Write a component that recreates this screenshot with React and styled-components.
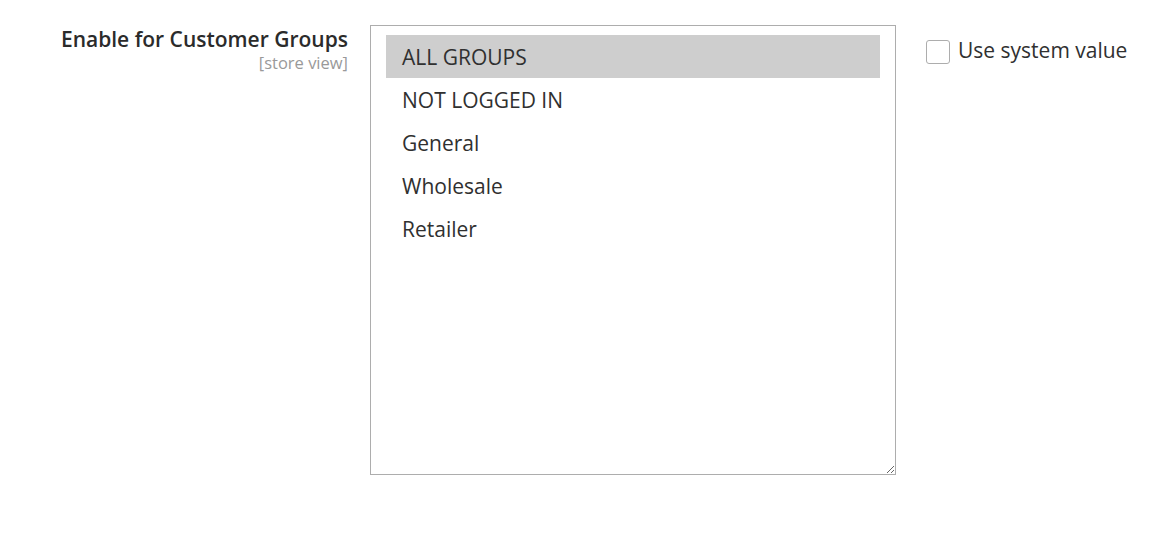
import styled, { createGlobalStyle } from "styled-components";

const GlobalStyle = createGlobalStyle`
    body {
        margin: 0;
        background: #fff;
        font-family: "Open Sans", "Liberation Sans", sans-serif;
        color: #303030;
    }
`;

const Field = styled.div`
    display: flex;
    align-items: flex-start;
    padding-top: 25px;
`;

const LabelCol = styled.div`
    width: 348px;
    text-align: right;
    padding-top: 2px;
`;

const Title = styled.div`
    font-size: 21px;
    font-weight: 600;
    line-height: 24px;
    color: #2b2b2b;
`;

const Scope = styled.div`
    margin-top: 3px;
    font-size: 16.5px;
    line-height: 18px;
    color: #999;
`;

const Control = styled.div`
    margin-left: 22px;
    width: 526px;
    height: 450px;
    border: 1px solid #adadad;
    padding: 9px 15px 0 15px;
    box-sizing: border-box;
    resize: both;
    overflow: auto;
`;

const Option = styled.div`
    height: 43px;
    box-sizing: border-box;
    padding: 1px 0 0 16px;
    line-height: 42px;
    font-size: 21px;
    color: #303030;
    background: ${(p) => (p.selected ? "#cecece" : "transparent")};
`;

const Inherit = styled.label`
    display: flex;
    align-items: center;
    gap: 8px;
    margin-left: 30px;
    margin-top: 11px;
    font-size: 21px;
    color: #303030;
`;

const Box = styled.span`
    width: 22px;
    height: 22px;
    border: 1px solid #adadad;
    border-radius: 3px;
    background: #fff;
    margin-top: 3px;
`;

const groups = ["ALL GROUPS", "NOT LOGGED IN", "General", "Wholesale", "Retailer"];

export default function App() {
    return (
        <>
            <GlobalStyle />
            <Field>
                <LabelCol>
                    <Title>Enable for Customer Groups</Title>
                    <Scope>[store view]</Scope>
                </LabelCol>
                <Control>
                    {groups.map((g, i) => (
                        <Option key={g} selected={i === 0}>
                            {g}
                        </Option>
                    ))}
                </Control>
                <Inherit>
                    <Box />
                    Use system value
                </Inherit>
            </Field>
        </>
    );
}
